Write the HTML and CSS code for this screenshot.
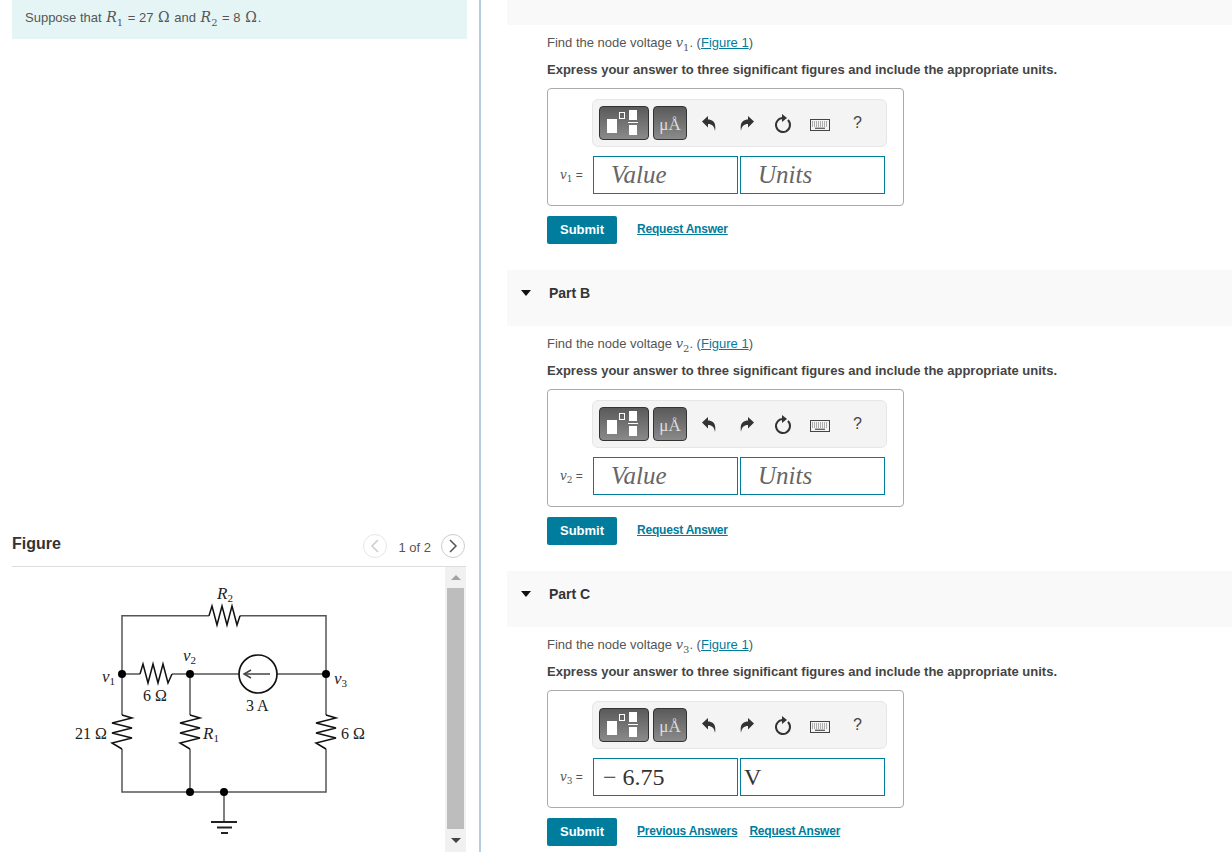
FILE: index.html
```html
<!DOCTYPE html>
<html lang="en">
<head>
    <meta charset="UTF-8">
    <title>Node voltages</title>
    <link rel="stylesheet" href="styles.css">
</head>
<body>
    <svg class="sprites" width="0" height="0">
        <symbol id="undo" viewBox="0 0 14 15"><path d="M0 5.5 L6 0 V3.5 C10.5 3.5 14.5 6 13 15 C12.5 10.5 10 8 6 8 V11.5 Z"/></symbol>
        <symbol id="reset" viewBox="0 0 18 20"><path d="M13.95 6.05 A7 7 0 1 1 9 4" fill="none" stroke="#333" stroke-width="2"/><path d="M8 0 L13 4 L8 8 Z"/></symbol>
        <symbol id="keyboard" viewBox="0 0 20 12">
            <rect x="0.5" y="0.5" width="19" height="11" fill="#f4f4f4" stroke="#444"/>
            <path d="M2 3 H18 M2 5 H18 M2 7 H18" stroke="#666" stroke-dasharray="1 1"/>
            <path d="M5 9.3 H15" stroke="#666" stroke-width="1.4"/>
        </symbol>
    </svg>

    <div class="page">
        <aside class="left-pane">
            <div class="statement">
                Suppose that <i class="math">R<sub>1</sub></i> = 27 <span class="ohm">Ω</span> and <i class="math">R<sub>2</sub></i> = 8 <span class="ohm">Ω</span>.
            </div>

            <div class="figure-panel">
                <div class="figure-head">
                    <h2>Figure</h2>
                    <div class="pager">
                        <span class="pager-btn off">
                            <svg width="10" height="14" viewBox="0 0 10 14"><path d="M8 1 L2 7 L8 13" fill="none" stroke="#ccc" stroke-width="1.5"/></svg>
                        </span>
                        <span class="pager-text">1 of 2</span>
                        <span class="pager-btn">
                            <svg width="10" height="14" viewBox="0 0 10 14"><path d="M2 1 L8 7 L2 13" fill="none" stroke="#555" stroke-width="1.5"/></svg>
                        </span>
                    </div>
                </div>
                <div class="figure-body">
                    <svg class="circuit" width="433" height="285" viewBox="12 567 433 285">
                        <g fill="none" stroke="#555" stroke-width="1.5">
                            <path d="M209 615.7 H122 V715 M122 749 V792 H326 V749 M326 715 V615.7 H240"/>
                            <path d="M122 674 H140 M172 674 H239 M277 674 H326"/>
                            <path d="M190 674 V715 M190 749 V792"/>
                            <path d="M224 792 V822"/>
                        </g>
                        <g fill="none" stroke="#222" stroke-width="2">
                            <path d="M211 822 H237"/>
                            <path d="M217 827.5 H232"/>
                            <path d="M221 833 H228"/>
                        </g>
                        <g fill="none" stroke="#111" stroke-width="1.5">
                            <path d="M209 615.7 L212 606 L217 625 L222 606 L227 625 L232 606 L237 625 L240 615.7"/>
                            <path d="M140 674 L143 664 L148 683 L153 664 L158 683 L163 664 L168 683 L172 674"/>
                            <path d="M122 715 L132 718 L112 723 L132 728 L112 733 L132 738 L112 743 L122 749"/>
                            <path d="M190 715 L200 718 L180 723 L200 728 L180 733 L200 738 L180 743 L190 749"/>
                            <path d="M326 715 L336 718 L316 723 L336 728 L316 733 L336 738 L316 743 L326 749"/>
                            <circle cx="258" cy="674" r="19" stroke-width="1.7"/>
                            <path d="M270 674 H245" stroke="#444"/>
                            <path d="M251 670 L244 674 L251 678" stroke="#444"/>
                        </g>
                        <g fill="#000">
                            <circle cx="122" cy="674" r="4"/>
                            <circle cx="190" cy="674" r="4"/>
                            <circle cx="326" cy="674" r="4"/>
                            <circle cx="190" cy="792" r="4"/>
                            <circle cx="224" cy="792" r="4"/>
                        </g>
                        <g class="labels">
                            <text x="217" y="599" class="it">R<tspan class="idx" dy="3">2</tspan></text>
                            <text x="183" y="661" class="it">v<tspan class="idx" dy="3">2</tspan></text>
                            <text x="102" y="682" class="it">v<tspan class="idx" dy="3">1</tspan></text>
                            <text x="334" y="684" class="it">v<tspan class="idx" dy="3">3</tspan></text>
                            <text x="143" y="701">6 Ω</text>
                            <text x="246" y="711">3 A</text>
                            <text x="75" y="739">21 Ω</text>
                            <text x="203" y="739" class="it">R<tspan class="idx" dy="3">1</tspan></text>
                            <text x="341" y="739">6 Ω</text>
                        </g>
                    </svg>
                    <div class="scrollbar">
                        <span class="scroll-arrow up"></span>
                        <span class="scroll-thumb"></span>
                        <span class="scroll-arrow down"></span>
                    </div>
                </div>
            </div>
        </aside>

        <main class="right-pane">
            <div class="part-head first"></div>
            <section class="part-body">
                <p class="question">Find the node voltage <i class="math">v<sub>1</sub></i>. (<a href="#">Figure 1</a>)</p>
                <p class="instruct">Express your answer to three significant figures and include the appropriate units.</p>
                <div class="answer-box">
                    <div class="toolbar">
                        <span class="tool-btn templates"><i class="t-big"></i><i class="t-small"></i><i class="t-frac"></i></span>
                        <span class="tool-btn units">μÅ</span>
                        <svg class="tool undo"><use href="#undo"/></svg>
                        <svg class="tool redo"><use href="#undo"/></svg>
                        <svg class="tool reset"><use href="#reset"/></svg>
                        <svg class="tool keyboard"><use href="#keyboard"/></svg>
                        <span class="help">?</span>
                    </div>
                    <div class="answer-row">
                        <span class="var"><i class="math">v<sub>1</sub></i> =</span>
                        <span class="field placeholder">Value</span>
                        <span class="field placeholder">Units</span>
                    </div>
                </div>
                <div class="actions">
                    <button class="submit">Submit</button>
                    <a href="#">Request Answer</a>
                </div>
            </section>

            <div class="part-head"><span class="caret"></span>Part B</div>
            <section class="part-body">
                <p class="question">Find the node voltage <i class="math">v<sub>2</sub></i>. (<a href="#">Figure 1</a>)</p>
                <p class="instruct">Express your answer to three significant figures and include the appropriate units.</p>
                <div class="answer-box">
                    <div class="toolbar">
                        <span class="tool-btn templates"><i class="t-big"></i><i class="t-small"></i><i class="t-frac"></i></span>
                        <span class="tool-btn units">μÅ</span>
                        <svg class="tool undo"><use href="#undo"/></svg>
                        <svg class="tool redo"><use href="#undo"/></svg>
                        <svg class="tool reset"><use href="#reset"/></svg>
                        <svg class="tool keyboard"><use href="#keyboard"/></svg>
                        <span class="help">?</span>
                    </div>
                    <div class="answer-row">
                        <span class="var"><i class="math">v<sub>2</sub></i> =</span>
                        <span class="field placeholder">Value</span>
                        <span class="field placeholder">Units</span>
                    </div>
                </div>
                <div class="actions">
                    <button class="submit">Submit</button>
                    <a href="#">Request Answer</a>
                </div>
            </section>

            <div class="part-head"><span class="caret"></span>Part C</div>
            <section class="part-body">
                <p class="question">Find the node voltage <i class="math">v<sub>3</sub></i>. (<a href="#">Figure 1</a>)</p>
                <p class="instruct">Express your answer to three significant figures and include the appropriate units.</p>
                <div class="answer-box">
                    <div class="toolbar">
                        <span class="tool-btn templates"><i class="t-big"></i><i class="t-small"></i><i class="t-frac"></i></span>
                        <span class="tool-btn units">μÅ</span>
                        <svg class="tool undo"><use href="#undo"/></svg>
                        <svg class="tool redo"><use href="#undo"/></svg>
                        <svg class="tool reset"><use href="#reset"/></svg>
                        <svg class="tool keyboard"><use href="#keyboard"/></svg>
                        <span class="help">?</span>
                    </div>
                    <div class="answer-row">
                        <span class="var"><i class="math">v<sub>3</sub></i> =</span>
                        <span class="field filled">− 6.75</span>
                        <span class="field filled unit-val">V</span>
                    </div>
                </div>
                <div class="actions">
                    <button class="submit">Submit</button>
                    <a href="#">Previous Answers</a>
                    <a href="#">Request Answer</a>
                </div>
            </section>
        </main>
    </div>
</body>
</html>
```

FILE: styles.css
```css
html, body {
    margin: 0;
    padding: 0;
    height: 100%;
    overflow: hidden;
}
body {
    font-family: "Liberation Sans", Arial, sans-serif;
    font-size: 13px;
    color: #555;
    background: #fff;
}
.sprites {
    position: absolute;
}
.page {
    display: flex;
    height: 852px;
    overflow: hidden;
}
.math {
    font-family: "DejaVu Serif", serif;
    font-style: italic;
    font-size: 13px;
}
.math sub {
    font-style: normal;
    font-size: 10px;
    line-height: 0;
}
.ohm {
    font-family: "DejaVu Serif", serif;
    font-size: 14px;
    margin: 0 1px;
}

/* left column */
.left-pane {
    width: 479px;
    flex: none;
    border-right: 2px solid #b7cde0;
    display: flex;
    flex-direction: column;
    justify-content: space-between;
}
.statement {
    margin-left: 12px;
    width: 442px;
    height: 39px;
    padding-left: 13px;
    line-height: 35px;
    background: #e5f5f6;
}
.statement .math {
    font-size: 14px;
    margin: 0 1px;
}
.figure-panel {
    margin-left: 12px;
    width: 454px;
}
.figure-head {
    display: flex;
    justify-content: space-between;
    align-items: center;
    height: 39px;
    border-bottom: 1px solid #ddd;
}
.figure-head h2 {
    margin: 0 0 6px;
    font-size: 16px;
    color: #333;
}
.pager {
    display: flex;
    align-items: center;
    gap: 10px;
    margin: 0 1px 2px 0;
}
.pager-btn {
    width: 24px;
    height: 24px;
    border: 1px solid #ccc;
    border-radius: 50%;
    box-sizing: border-box;
    display: flex;
    align-items: center;
    justify-content: center;
}
.pager-btn.off {
    border-color: #e6e6e6;
}
.pager-text {
    font-size: 13px;
    margin: 4px 0 0 1px;
}
.figure-body {
    display: flex;
    height: 285px;
}
.circuit {
    display: block;
    flex: none;
}
.labels text {
    font-family: "Liberation Serif", serif;
    font-size: 16px;
    fill: #222;
}
.labels .it {
    font-style: italic;
    font-size: 17px;
}
.labels .idx {
    font-style: normal;
    font-size: 11px;
}
.scrollbar {
    width: 21px;
    background: #f1f1f1;
    display: flex;
    flex-direction: column;
    align-items: center;
    justify-content: space-between;
}
.scroll-thumb {
    width: 17px;
    flex: 1;
    background: #bdbdbd;
}
.scroll-arrow {
    height: 21px;
    display: flex;
    align-items: center;
}
.scroll-arrow::before {
    content: "";
    border-left: 5px solid transparent;
    border-right: 5px solid transparent;
}
.scroll-arrow.up::before {
    border-bottom: 5px solid #a3a3a3;
}
.scroll-arrow.down {
    height: 23px;
}
.scroll-arrow.down::before {
    border-top: 5px solid #444;
}

/* right column */
.right-pane {
    flex: 1;
    min-width: 0;
}
.part-head {
    display: flex;
    align-items: center;
    margin-left: 26px;
    height: 56px;
    padding: 0 0 10px 42px;
    box-sizing: border-box;
    background: #f9f9f9;
    font-size: 14px;
    font-weight: bold;
    color: #333;
    position: relative;
}
.part-head.first {
    height: 25px;
    padding: 0;
}
.caret {
    position: absolute;
    left: 14px;
    top: 20px;
    border-left: 5.5px solid transparent;
    border-right: 5.5px solid transparent;
    border-top: 6px solid #111;
}
.part-body {
    margin-left: 66px;
    height: 245px;
    overflow: hidden;
    padding-top: 9px;
    box-sizing: border-box;
}
.part-body p {
    margin: 0;
    line-height: 18px;
}
.question {
    height: 27px;
}
.question a {
    color: #007c9c;
}
.instruct {
    font-weight: bold;
    color: #444;
}
.answer-box {
    margin-top: 9px;
    width: 357px;
    height: 118px;
    border: 1px solid #aaa;
    border-radius: 4px;
    box-sizing: border-box;
    padding: 10px 16px 0 44px;
}
.toolbar {
    display: flex;
    align-items: center;
    height: 48px;
    padding-left: 6px;
    background: #f4f4f4;
    border: 1px solid #e6e6e6;
    border-radius: 6px;
    box-sizing: border-box;
}
.tool-btn {
    height: 34px;
    box-sizing: border-box;
    border: 1px solid #333;
    border-radius: 4px;
    background: linear-gradient(#5a5a5a, #8a8a8a);
    position: relative;
    display: block;
    flex: none;
}
.templates {
    width: 50px;
}
.templates i {
    position: absolute;
    display: block;
}
.t-big {
    left: 7px;
    top: 12px;
    width: 10px;
    height: 14px;
    background: #fff;
}
.t-small {
    left: 19px;
    top: 5px;
    width: 6px;
    height: 7px;
    border: 1px solid #fff;
    box-sizing: border-box;
}
.t-frac {
    left: 29px;
    top: 3px;
    width: 8px;
    height: 10px;
    background: #fff;
    box-shadow: 0 15px 0 #fff;
}
.t-frac::after {
    content: "";
    position: absolute;
    left: -1px;
    top: 12px;
    width: 10px;
    height: 1px;
    background: #fff;
}
.units {
    width: 34px;
    margin-left: 4px;
    font-family: "Liberation Serif", serif;
    font-size: 17px;
    line-height: 36px;
    text-align: center;
    color: #ddd;
}
.tool {
    display: block;
    fill: #333;
    flex: none;
}
.undo, .redo {
    width: 14px;
    height: 15px;
}
.undo {
    margin-left: 15px;
}
.redo {
    margin-left: 24px;
    transform: scaleX(-1);
}
.reset {
    width: 18px;
    height: 20px;
    margin: 1px 0 0 20px;
}
.keyboard {
    width: 20px;
    height: 12px;
    margin: 3px 0 0 18px;
}
.help {
    margin-left: 23px;
    font-size: 16px;
    color: #444;
}
.answer-row {
    display: flex;
    align-items: center;
    margin-top: 9px;
    margin-left: -32px;
}
.var {
    width: 33px;
    flex: none;
    font-size: 12px;
    white-space: nowrap;
}
.var .math {
    font-size: 12px;
}
.var sub {
    font-size: 9px;
}
.field {
    width: 145px;
    flex: none;
    height: 38px;
    border: 1px solid #007c9c;
    box-sizing: border-box;
    font-family: "Liberation Serif", serif;
    font-size: 25px;
    line-height: 36px;
    padding-left: 17px;
    margin-right: 2px;
}
.placeholder {
    font-style: italic;
    color: #666;
}
.filled {
    color: #333;
    font-size: 24px;
    padding-left: 9px;
}
.unit-val {
    padding-left: 3px;
}
.actions {
    display: flex;
    align-items: center;
    margin-top: 10px;
    font-size: 12px;
    font-weight: bold;
}
.actions a {
    color: #007c9c;
    margin-left: 12px;
    margin-bottom: 2px;
    letter-spacing: -0.2px;
}
.actions .submit + a {
    margin-left: 20px;
}
.submit {
    width: 70px;
    height: 28px;
    border: none;
    border-radius: 2px;
    background: #007c9c;
    color: #fff;
    font-family: "Liberation Sans", Arial, sans-serif;
    font-size: 13px;
    font-weight: bold;
    padding: 0 0 2px;
}
```
